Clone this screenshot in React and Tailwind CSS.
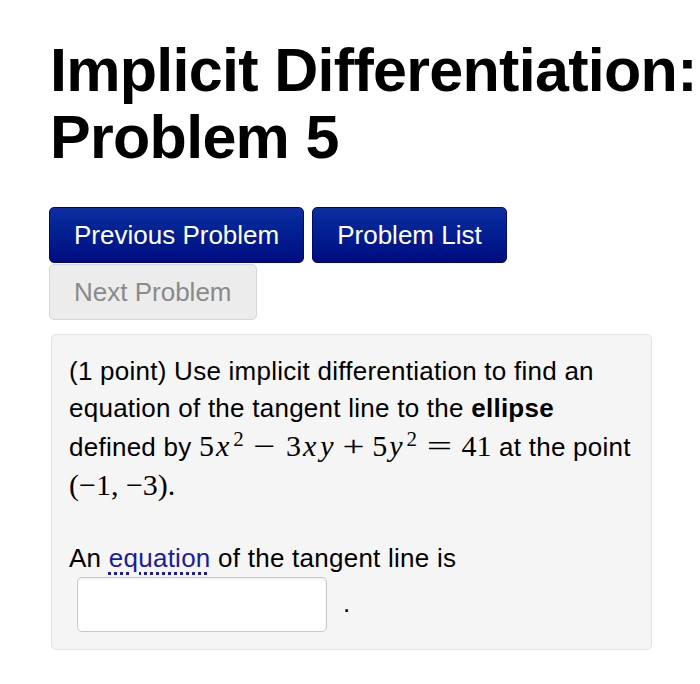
export default function App() {
  return (
    <div className="min-h-[684px] overflow-hidden bg-white px-[49px] pt-[37px] text-black" style={{ fontFamily: '"Liberation Sans", Arial, sans-serif' }}>
      <h1 className="ml-[1px] w-[680px] text-[61px] font-bold leading-[67px] tracking-[-0.7px]">
        Implicit Differentiation: Problem 5
      </h1>

      <div className="mt-[36px] flex flex-wrap gap-x-2 gap-y-[1px]">
        <NavButton>Previous Problem</NavButton>
        <NavButton>Problem List</NavButton>
        <button className="h-[56px] rounded-[5px] border border-[#d6d6d6] bg-[#ececec] px-[24px] text-[26px] text-[#8a8a8a]">
          Next Problem
        </button>
      </div>

      <div className="mt-[14px] ml-[2px] w-[601px] rounded-[5px] border border-[#e2e2e2] bg-[#f5f5f5] px-[17px] pt-[18px] pb-[17px] text-[26px] leading-[37px] tracking-[0.25px]">
        <p>
          (1 point) Use implicit differentiation to find an equation of the tangent line to the{' '}
          <b>ellipse</b> defined by{' '}
          <M>
            5<V>x</V><Sup>2</Sup><Op>−</Op>3<V>x</V><V>y</V><Op plus>+</Op>5<V>y</V><Sup>2</Sup><Op wide>=</Op>41
          </M>{' '}
          at the point <M>(−1, −3).</M>
        </p>
        <p className="mt-[35px]">
          An{' '}
          <span className="text-[#1c1ca0] underline decoration-dotted decoration-[#1c1ca0] decoration-[3px] underline-offset-[5px]">equation</span>{' '}
          of the tangent line is
        </p>
        <div className="flex items-end">
          <input className="ml-[8px] h-[55px] w-[250px] rounded-[5px] border border-[#c8c8c8] bg-white shadow-[inset_0_1px_2px_rgba(0,0,0,0.08)]" />
          <span className="mb-[10px] ml-[16px]">.</span>
        </div>
      </div>
    </div>
  )
}

function NavButton({ children }) {
  return (
    <button className="h-[56px] rounded-[5px] border border-[#000a6e] bg-gradient-to-b from-[#0b2ea0] to-[#000a80] px-[24px] text-[26px] text-white">
      {children}
    </button>
  )
}

function M({ children }) {
  return (
    <span className="whitespace-nowrap text-[30px] tracking-normal" style={{ fontFamily: '"Liberation Serif", "Times New Roman", serif' }}>
      {children}
    </span>
  )
}

function V({ children }) {
  return <i className="mx-[2px]">{children}</i>
}

function Op({ children, wide, plus }) {
  if (wide) return <span className="mx-[0.46em] inline-block scale-x-[1.5]">{children}</span>
  if (plus) return <span className="mx-[0.33em] inline-block scale-x-[1.3]">{children}</span>
  return <span className="mx-[0.42em] inline-block scale-x-[1.3]">{children}</span>
}

function Sup({ children }) {
  return <sup className="ml-[2px] text-[0.7em]">{children}</sup>
}
